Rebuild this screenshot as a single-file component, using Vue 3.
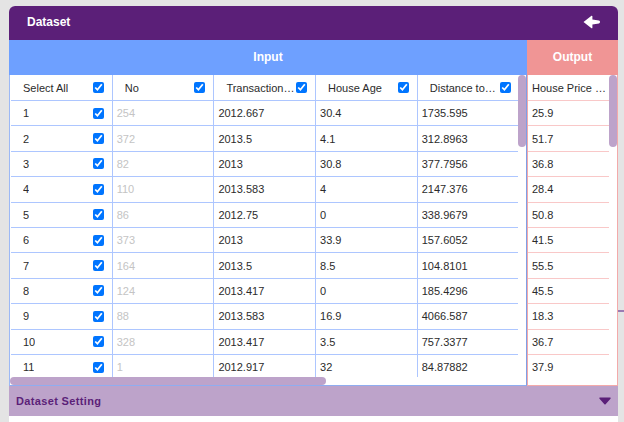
<script setup>
const columns = ["Transaction Date", "House Age", "Distance to MRT"];

// Rows visible in the table; the thumbs stand for the rest of the data set
const rows = [
  { id: 1, no: 254, date: "2012.667", age: "30.4", dist: "1735.595", price: "25.9" },
  { id: 2, no: 372, date: "2013.5", age: "4.1", dist: "312.8963", price: "51.7" },
  { id: 3, no: 82, date: "2013", age: "30.8", dist: "377.7956", price: "36.8" },
  { id: 4, no: 110, date: "2013.583", age: "4", dist: "2147.376", price: "28.4" },
  { id: 5, no: 86, date: "2012.75", age: "0", dist: "338.9679", price: "50.8" },
  { id: 6, no: 373, date: "2013", age: "33.9", dist: "157.6052", price: "41.5" },
  { id: 7, no: 164, date: "2013.5", age: "8.5", dist: "104.8101", price: "55.5" },
  { id: 8, no: 124, date: "2013.417", age: "0", dist: "185.4296", price: "45.5" },
  { id: 9, no: 88, date: "2013.583", age: "16.9", dist: "4066.587", price: "18.3" },
  { id: 10, no: 328, date: "2013.417", age: "3.5", dist: "757.3377", price: "36.7" },
  { id: 11, no: 1, date: "2012.917", age: "32", dist: "84.87882", price: "37.9" },
];
</script>

<template>
  <div class="page">
    <div class="card">
      <header class="title">
        <span>Dataset</span>
        <svg class="back" width="18" height="14" viewBox="0 0 18 14">
          <path d="M0.5 7 L8.5 0.8 C9 0.5 9.4 0.8 9.4 1.3 L9.4 4.6 L16 5.6 C17.4 5.9 17.4 8.1 16 8.4 L9.4 9.4 L9.4 12.7 C9.4 13.2 9 13.5 8.5 13.2 Z" fill="#fff" />
        </svg>
      </header>

      <div class="bands">
        <div class="band input">Input</div>
        <div class="band output">Output</div>
      </div>

      <div class="panes">
        <div class="pane pane-input">
          <div class="view">
            <div class="sheet">
              <div class="row head">
                <div class="cell first">
                  <span class="label">Select All</span>
                  <input type="checkbox" checked />
                </div>
                <div class="cell">
                  <span class="label">No</span>
                  <input type="checkbox" checked />
                </div>
                <div v-for="col in columns" :key="col" class="cell">
                  <span class="label">{{ col }}</span>
                  <input type="checkbox" checked />
                </div>
              </div>
              <div v-for="row in rows" :key="row.id" class="row">
                <div class="cell first">
                  <span class="label">{{ row.id }}</span>
                  <input type="checkbox" checked />
                </div>
                <div class="cell value muted">{{ row.no }}</div>
                <div class="cell value">{{ row.date }}</div>
                <div class="cell value">{{ row.age }}</div>
                <div class="cell value">{{ row.dist }}</div>
              </div>
            </div>
          </div>
          <div class="track-v"><div class="thumb thumb-v"></div></div>
          <div class="track-h"><div class="thumb thumb-h"></div></div>
        </div>

        <div class="pane pane-output">
          <div class="view">
            <div class="row-out head">
              <span class="label">House Price of Unit Area</span>
            </div>
            <div v-for="row in rows" :key="row.id" class="row-out">{{ row.price }}</div>
          </div>
          <div class="track-v"><div class="thumb thumb-v"></div></div>
        </div>
      </div>

      <footer class="setting">
        <span>Dataset Setting</span>
        <svg width="12" height="8" viewBox="0 0 12 8">
          <path d="M1 0.5 H11 C11.6 0.5 11.9 1.2 11.5 1.7 L6.6 7.2 C6.3 7.6 5.7 7.6 5.4 7.2 L0.5 1.7 C0.1 1.2 0.4 0.5 1 0.5 Z" fill="#5b1f78" />
        </svg>
      </footer>
    </div>
    <div class="side">
      <div class="side-line"></div>
    </div>
  </div>
</template>

<style scoped>
.page {
  display: flex;
  width: 624px;
  height: 422px;
  overflow: hidden;
  box-sizing: border-box;
  padding: 6px 0 0 9px;
  background: #e4e4e4;
  font-family: "Liberation Sans", Arial, sans-serif;
  font-size: 11px;
  color: #2b2b2b;
}

.card {
  width: 609px;
  flex: none;
  display: flex;
  flex-direction: column;
  background: #fff;
  border-radius: 6px 6px 0 0;
  overflow: hidden;
}

.title {
  height: 34px;
  flex: none;
  box-sizing: border-box;
  background: #5b1f78;
  color: #fff;
  font-size: 12px;
  font-weight: bold;
  display: flex;
  align-items: center;
  justify-content: space-between;
  padding: 0 17px 2px 18px;
}

.bands {
  display: flex;
  height: 35px;
  flex: none;
  color: #fff;
  font-size: 12px;
  font-weight: bold;
}

.band {
  display: flex;
  align-items: center;
  justify-content: center;
  box-sizing: border-box;
  padding-bottom: 1px;
}

.band.input {
  width: 518px;
  background: #6ea0ff;
}

.band.output {
  flex: 1;
  background: #f09595;
}

.panes {
  display: flex;
  height: 311px;
  flex: none;
}

.pane {
  box-sizing: border-box;
  display: grid;
  grid-template-columns: minmax(0, 1fr) 8px;
  grid-template-rows: minmax(0, 1fr) 8px;
  background: #fff;
}

.pane-input {
  width: 518px;
  border-left: 1px solid #9db9f5;
  border-right: 1px solid #7f9fe6;
  border-bottom: 1px solid #8fadf0;
}

.pane-output {
  flex: 1;
  border-left: 1px solid #f3aaaa;
  border-right: 1px solid #f3aaaa;
  border-bottom: 1px solid #f3aaaa;
}

.view {
  overflow: hidden;
}

.track-v {
  grid-column: 2;
  grid-row: 1 / 3;
}

.track-h {
  grid-column: 1;
  grid-row: 2;
}

.thumb {
  background: #bda3ca;
  border-radius: 4px;
}

.thumb-v {
  height: 72px;
}

.thumb-h {
  width: 316px;
  height: 8px;
}

.sheet {
  width: 816px;
  padding-left: 1px;
}

.row {
  display: flex;
  height: 25.4px;
  box-sizing: border-box;
  border-bottom: 1px solid #adc6ff;
}

.row.head {
  height: 26px;
}

.cell {
  width: 101.7px;
  flex: none;
  box-sizing: border-box;
  display: flex;
  align-items: center;
  justify-content: space-between;
  border-right: 1px solid #adc6ff;
  padding: 0 8px 0 12px;
}

.cell:last-child {
  border-right: none;
}

.cell.value {
  padding: 0 4px;
  justify-content: flex-start;
}

.muted {
  color: #c4c4c4;
}

.label {
  min-width: 0;
  margin-right: 2px;
  white-space: nowrap;
  overflow: hidden;
  text-overflow: ellipsis;
}

.cell:nth-child(3) .label {
  margin-right: 1px;
}

input[type="checkbox"] {
  width: 11px;
  height: 11px;
  margin: 0;
  flex: none;
}

.row-out {
  height: 25.4px;
  box-sizing: border-box;
  border-bottom: 1px solid #f9c8c8;
  display: flex;
  align-items: center;
  padding-left: 4px;
}

.row-out.head {
  height: 26px;
}

.setting {
  height: 30px;
  flex: none;
  box-sizing: border-box;
  background: #bda3ca;
  color: #5b1f78;
  font-weight: bold;
  letter-spacing: 0.35px;
  display: flex;
  align-items: center;
  justify-content: space-between;
  padding: 0 7px;
}

.side {
  flex: 1;
}

.side-line {
  height: 2px;
  margin-top: 304px;
  background: #9a7bb3;
}
</style>
